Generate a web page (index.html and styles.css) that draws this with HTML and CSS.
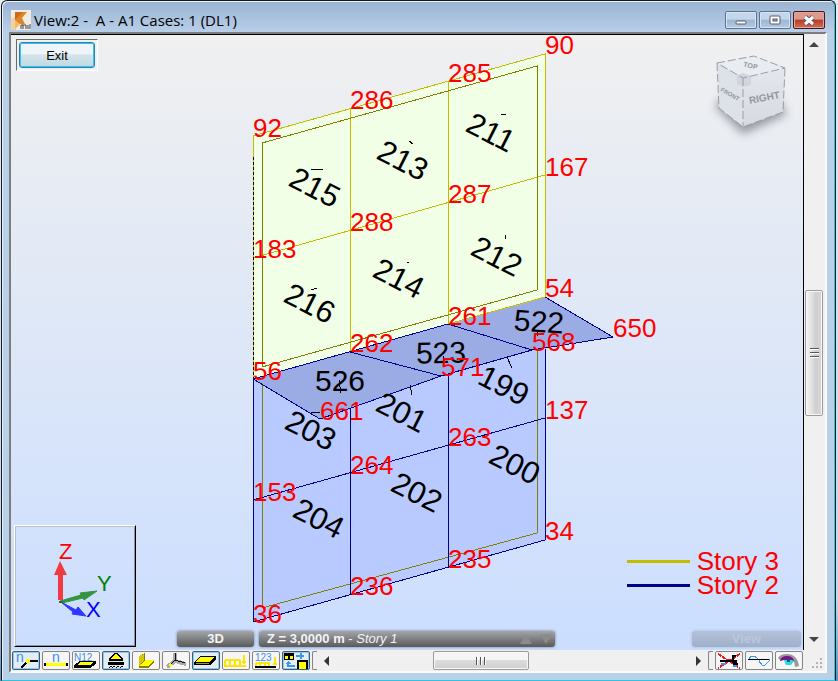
FILE: index.html
```
<!DOCTYPE html>
<html lang="en">
<head>
<meta charset="utf-8">
<title>View:2 - A - A1 Cases: 1 (DL1)</title>
<link rel="stylesheet" href="styles.css">
</head>
<body>
<main class="window">
  <header class="titlebar">
    <svg class="app-icon" viewBox="0 0 20 20" aria-hidden="true">
      <rect width="20" height="20" fill="#f3ece2"/>
      <path d="M0 20V9l5-3v14z" fill="#f0d3a4"/>
      <path d="M4 2h12l-5 6 3 6H9L4 18z" fill="#e0862a"/>
      <path d="M4 2h8L4 10z" fill="#c96a1c"/>
      <path d="M4 10l5 4-5 5z" fill="#f4b866"/>
      <path d="M10 19v-4h5v4M12 15v4M17 15v4M19 14v5" fill="none" stroke="#444"/>
    </svg>
    <h1 class="title">View:2 -&nbsp; A - A1 Cases: 1 (DL1)</h1>
    <div class="window-buttons">
      <button class="win-btn" aria-label="Minimize">
        <svg viewBox="0 0 30 16"><rect x="10" y="9" width="10" height="3" rx="1" fill="#fff" stroke="#555a66"/></svg>
      </button>
      <button class="win-btn" aria-label="Maximize">
        <svg viewBox="0 0 30 16"><rect x="10" y="4" width="10" height="8" rx="1" fill="#fff" stroke="#555a66"/><rect x="13" y="7" width="4" height="2" fill="#9ab4d2" stroke="#555a66"/></svg>
      </button>
      <button class="win-btn close" aria-label="Close">
        <svg viewBox="0 0 30 16"><path d="M11 5l8 7M19 5l-8 7" stroke="#555a66" stroke-width="5"/><path d="M11 5l8 7M19 5l-8 7" stroke="#fff" stroke-width="3"/></svg>
      </button>
    </div>
  </header>

  <section class="client">
    <div class="workspace">
      <div class="viewport">
        <svg class="model" viewBox="11 35 792 615" role="img" aria-label="Structural model of stories 2 and 3">
          <polygon points="253,136 546,54 546,297 253,379" fill="#f1ffe6"/>
          <polygon points="253,379 320,419 441,376 532,350 546,348 546,540 253,622" fill="#b8caff"/>
          <polygon points="253,379 546,297 613,337 532,350 441,376 320,419" fill="#9babe4"/>

          <g class="lines">
            <path class="yellow" d="M253 136L545 54V297L448 324M253 258L545 175M350 109V352M448 81V324M253 136V379"/>
            <path class="hidden-edge" d="M253 157V379"/>
            <path class="olive" d="M262 367V143L537 66V290L262 367M262 385V608L537 533V350"/>
            <path class="navy" d="M448 324L253 379V622L545 540V349M253 500L545 418M350 409V595M448 374V567"/>
            <path class="navy" d="M545 297L613 337L532 350L441 376L320 419L253 379M350 352L441 376M448 324L532 350"/>
            <path class="tick" d="M311 169H318L323 170M409 141L413 144M501 114H506M311 290L317 288M407 262H409M505 235V239M410 385L412 395M339 380L341 393M507 357L512 368M311 412L320 413M537 330V336M443 356V363"/>
          </g>

          <g class="panel-labels tilted">
            <text transform="translate(491 132) rotate(27)" y="11">211</text>
            <text transform="translate(403 160) rotate(27)" y="11">213</text>
            <text transform="translate(315 187) rotate(27)" y="11">215</text>
            <text transform="translate(497 256) rotate(27)" y="11">212</text>
            <text transform="translate(399 278) rotate(27)" y="11">214</text>
            <text transform="translate(310 303) rotate(27)" y="11">216</text>
            <text transform="translate(504 385) rotate(27)" y="11">199</text>
            <text transform="translate(402 412) rotate(27)" y="11">201</text>
            <text transform="translate(311 430) rotate(27)" y="11">203</text>
            <text transform="translate(515 464) rotate(27)" y="11">200</text>
            <text transform="translate(417 492) rotate(27)" y="11">202</text>
            <text transform="translate(319 518) rotate(27)" y="11">204</text>
          </g>
          <g class="panel-labels">
            <text transform="translate(539 321) rotate(4)" y="11">522</text>
            <text transform="translate(441 352) rotate(-1)" y="11">523</text>
            <text transform="translate(340 380)" y="11">526</text>
          </g>

          <g class="node-labels">
            <text x="253" y="137">92</text><text x="350" y="109">286</text><text x="448" y="82">285</text><text x="545" y="54">90</text>
            <text x="253" y="258">183</text><text x="350" y="231">288</text><text x="448" y="203">287</text><text x="545" y="176">167</text>
            <text x="253" y="380">56</text><text x="350" y="352">262</text><text x="448" y="325">261</text><text x="545" y="297">54</text>
            <text x="253" y="501">153</text><text x="350" y="474">264</text><text x="448" y="446">263</text><text x="545" y="419">137</text>
            <text x="253" y="623">36</text><text x="350" y="595">236</text><text x="448" y="568">235</text><text x="545" y="540">34</text>
            <text x="613" y="337">650</text><text x="532" y="351">568</text><text x="441" y="376">571</text><text x="320" y="420">661</text>
          </g>
        </svg>

        <div class="exit-panel"><button class="exit">Exit</button></div>

        <svg class="cube" viewBox="0 0 96 96" role="img" aria-label="View cube">
          <defs>
            <filter id="soft" x="-30%" y="-30%" width="160%" height="160%"><feGaussianBlur stdDeviation="5"/></filter>
            <linearGradient id="side" x1="0" y1="0" x2="0" y2="1"><stop offset="0" stop-color="#e4e8ee"/><stop offset="1" stop-color="#d6d9e0"/></linearGradient>
          </defs>
          <path d="M10 62L38 90L82 70L70 52L20 52z" fill="#777b84" opacity="0.75" filter="url(#soft)"/>
          <path d="M12 19L49 12L80 24L38 34z" fill="#e9ecf1"/>
          <path d="M12 19L38 34V83L14 64z" fill="#dde1e8"/>
          <path d="M38 34L80 24L78 68L38 83z" fill="url(#side)"/>
          <path d="M32 31L38 29L46 32V41L38 43L32 40z" fill="#d2d6dc"/>
          <path d="M12 19L49 12L80 24L38 34zM12 19L14 64L38 83L78 68L80 24M38 34V83" fill="none" stroke="#9a9da3" stroke-dasharray="8 3"/>
          <text class="face right" transform="translate(60 57) rotate(-11)">RIGHT</text>
          <text class="face front" transform="translate(24 52) rotate(30)">FRONT</text>
          <text class="face top" transform="translate(45 24) rotate(12)">TOP</text>
        </svg>

        <ul class="legend">
          <li><span class="swatch story3"></span>Story 3</li>
          <li><span class="swatch story2"></span>Story 2</li>
        </ul>

        <div class="overlay-bar">
          <svg class="axes" viewBox="0 0 120 120" role="img" aria-label="Axes X Y Z">
            <path d="M45 75L66 69L65 67L82 65L69 74L68 72L47 77z" fill="#33953d" stroke="#33953d"/>
            <path d="M46 76L61 84L63 81L71 90L57 88L58 86z" fill="#3038ff" stroke="#3038ff"/>
            <path d="M43 74V49H39L45 35L52 49H48V74z" fill="#f23a42"/>
            <path d="M44 75h4v2h-4z" fill="#2d6a30"/>
            <text x="44" y="33" fill="#ff0000">Z</text>
            <text x="82" y="65" fill="#008000">Y</text>
            <text x="71" y="91" fill="#0000ff">X</text>
          </svg>
          <button class="pill mode">3D</button>
          <div class="pill level"><span><b>Z = 3,0000 m</b> - <i>Story 1</i></span>
            <span class="level-nav">
              <button aria-label="Level up"><svg viewBox="0 0 12 10"><path d="M6 0L12 10H0z"/></svg></button>
              <button aria-label="Level down"><svg viewBox="0 0 12 10"><path d="M6 10L12 0H0z"/></svg></button>
            </span>
          </div>
          <button class="pill view">View</button>
        </div>
      </div>

      <div class="scroll vertical" role="scrollbar" aria-orientation="vertical" aria-valuenow="50">
        <button class="arrow" aria-label="Scroll up"><svg viewBox="0 0 10 6"><path d="M5 0L10 5H0z" fill="#444"/></svg></button>
        <span class="lead"></span>
        <span class="thumb"><i></i><i></i><i></i></span>
        <span class="trail"></span>
        <button class="arrow" aria-label="Scroll down"><svg viewBox="0 0 10 6"><path d="M5 5L10 0H0z" fill="#444"/></svg></button>
      </div>
    </div>

    <footer class="toolbar">
      <div class="tools">
        <button class="tool on" aria-label="Node numbers"><svg viewBox="1 1 26 17"><text x="4" y="11">n</text><path d="M14 12L9 17" stroke="#000" stroke-width="2"/><path d="M18 9h8v2h-8z"/><path d="M14 8h4v4h-4z" fill="#ff0"/></svg></button>
        <button class="tool" aria-label="Bar numbers"><svg viewBox="1 1 26 17"><text x="10" y="11">n</text><path d="M3 12h22v3H3z" fill="#ff0"/><path d="M2 12h2v3H2zM24 12h2v3h-2z"/></svg></button>
        <button class="tool" aria-label="Panel numbers"><svg viewBox="1 1 26 17"><text class="wide" x="2" y="10">N12</text><path d="M8 10H24V13L18 17H2V14z"/><path d="M9 11H22L18 14H5z" fill="#ff0"/></svg></button>
        <button class="tool on" aria-label="Supports"><svg viewBox="1 1 26 17"><path d="M7 10V8L12 2H16L21 8V10z"/><path d="M9 8L13 3H15L19 8z" fill="#ff0"/><path d="M6 11h16v3H6zM8 15h2v1H8zM11 15h2v1h-2zM15 15h2v1h-2zM19 15h2v1h-2zM7 16h1v1H7zM10 16h1v1h-1zM14 16h1v1h-1zM18 16h1v1h-1z"/></svg></button>
        <button class="tool" aria-label="Sections"><svg viewBox="1 1 26 17"><path d="M7 5L13 2V9H22V11L16 17H7z" fill="#8a7d00"/><path d="M7 5L12 3V9L9 12V15H7z" fill="#d6c800"/><path d="M8 14L13 9H22L16 15H8z" fill="#ff0"/></svg></button>
        <button class="tool" aria-label="Local systems"><svg viewBox="1 1 26 17"><path d="M13 2V10L5 16M13 10L24 13" stroke="#aaa" stroke-width="4" fill="none"/><path d="M13 2V9L8 14M13 9L23 12" stroke="#111" fill="none"/><path d="M6 14l2-2 2 2-2 2z" fill="#ff0"/></svg></button>
        <button class="tool on" aria-label="Panel thickness"><svg viewBox="1 1 26 17"><path d="M8 5H24V8L18 14H2V11z"/><path d="M8 6H22L17 11H4z" fill="#ff0"/><path d="M4 12H17V13H4z" fill="#a89c00"/></svg></button>
        <button class="tool" aria-label="Load symbols"><svg viewBox="1 1 26 17"><path d="M3 9H18M3 9V15M8 9V15M13 9V15M18 9V15M2 15H24M22 4V13M20 11H24" stroke="#ffe600" stroke-width="2" fill="none"/></svg></button>
        <button class="tool" aria-label="Load values"><svg viewBox="1 1 26 17"><text class="wide" x="3" y="10">123</text><path d="M4 12H18M4 12V15M8 12V15M13 12V15M17 12V15M23 6V14M21 13H25" stroke="#ffe600" stroke-width="2" fill="none"/><path d="M3 15H24V17H3z"/></svg></button>
        <button class="tool on" aria-label="Swap display"><svg viewBox="1 1 26 17"><path d="M2 2H12V9H2zM15 9H26V18H15z"/><path d="M3 5H6V8H3zM8 5H11V8H8zM17 11H24V18H17z" fill="#ff0"/><path d="M14 5H22M19 2V8M6 11V15H13" stroke="#3b96f2" stroke-width="2" fill="none"/><path d="M3 13L6 10L9 13z" fill="#3b96f2"/></svg></button>
        <span class="stub"></span>
      </div>
      <div class="scroll horizontal" role="scrollbar" aria-orientation="horizontal" aria-valuenow="38">
        <button class="arrow" aria-label="Scroll left"><svg viewBox="0 0 6 10"><path d="M0 5L5 0V10z" fill="#333"/></svg></button>
        <span class="lead"></span>
        <span class="thumb"><i></i><i></i><i></i></span>
        <span class="trail"></span>
        <button class="arrow" aria-label="Scroll right"><svg viewBox="0 0 6 10"><path d="M6 5L1 0V10z" fill="#333"/></svg></button>
      </div>
      <div class="tools">
        <span class="stub"></span>
        <button class="tool" aria-label="Deformation off"><svg viewBox="1 1 26 17"><path d="M3 3L25 17M25 3L3 17" stroke="#f01818" stroke-width="2" stroke-dasharray="4 1"/><path d="M5 9H22V11H5zM17 4H21V6H19V9H17zM17 9L23 12V14H18z"/><path d="M6 13H11M18 15H22" stroke="#3b96f2" stroke-width="2"/></svg></button>
        <button class="tool" aria-label="Diagrams"><svg viewBox="1 1 26 17"><path d="M4 8V7L7 5H9L12 7V8M14 9V10L17 14H20L24 10V8" stroke="#3b96f2" fill="none"/><path d="M3 8H24V9H3z"/></svg></button>
        <button class="tool" aria-label="Display attributes"><svg class="smooth" viewBox="1 1 26 17"><path d="M3 7Q5 3 12 3Q22 3 24 15L20 16Q20 8 13 7Q7 7 6 10z" fill="#9a9a9a"/><path d="M5 10Q6 5 12 5Q18 5 19 10L15 9H9z" fill="#76148c"/><path d="M9 9H14L19 10L16 14H11z" fill="#20dce8"/><path d="M12 8H15V11H12z" fill="#125b64"/></svg></button>
      </div>
      <svg class="grip" viewBox="0 0 12 12" aria-hidden="true"><path d="M9 1h2v2H9zM5 5h2v2H5zM9 5h2v2H9zM1 9h2v2H1zM5 9h2v2H5zM9 9h2v2H9z" fill="#b4b4b4"/></svg>
    </footer>
  </section>
</main>
</body>
</html>
```
FILE: styles.css
```
* {
  box-sizing: border-box;
}

body {
  margin: 0;
  height: 100vh;
  padding: 0 2px 0 1px;
  background: linear-gradient(#e8ecf2, #c5d8ec 88%, #5b8fc0);
  font: 13px "Liberation Sans", Arial, sans-serif;
  color: #000;
}

button {
  margin: 0;
  padding: 0;
  font: inherit;
  color: inherit;
}

svg {
  display: block;
  overflow: visible;
}

.window {
  display: flex;
  flex-direction: column;
  height: 100%;
  padding: 0 8px 7px 7px;
  border: 1px solid #16181c;
  border-bottom-color: #2cc5e0;
  border-radius: 6px 6px 0 0;
  background: linear-gradient(#99b3d1, #b9d0e9 32px, #b9d0e9);
  box-shadow: inset 1px 1px #e6f0fa, inset -1px 0 #2cc5e0;
}

.titlebar {
  flex: none;
  display: flex;
  align-items: center;
  height: 31px;
  padding: 6px 2px 0 2px;
}

.app-icon {
  width: 20px;
  height: 20px;
}

.title {
  flex: 1;
  margin: 0 0 0 3px;
  font: 15px "Open Sans", "Noto Sans", sans-serif;
  white-space: nowrap;
}

.window-buttons {
  display: flex;
  gap: 2px;
}

.win-btn {
  width: 32px;
  height: 18px;
  border: 1px solid #5c738f;
  border-radius: 2px;
  background: linear-gradient(#c4d6ea 45%, #9db6d2 50%, #b3cbe4);
  box-shadow: inset 0 0 0 1px #d6e4f3;
}

.win-btn svg {
  width: 30px;
  height: 16px;
}

.win-btn.close {
  border-color: #4a1420;
  background: linear-gradient(#dd9a8b 45%, #b93b24 50%, #cf6f56);
  box-shadow: inset 0 0 0 1px #e0a79a;
}

.client {
  flex: 1;
  min-height: 0;
  display: flex;
  flex-direction: column;
  border: 2px solid #7d7d7d;
  border-right: 2px solid #fbfbfb;
  border-bottom: 2px solid #fbfbfb;
  background: #f0f0f0;
}

.workspace {
  flex: 1;
  min-height: 0;
  display: flex;
}

.viewport {
  position: relative;
  flex: 1;
  min-width: 0;
  border-top: 1px solid #000;
  border-right: 1px solid #000;
  background: linear-gradient(#f0f0f0, #cbdeff);
}

.model {
  width: 100%;
  height: 100%;
}

.lines {
  fill: none;
  stroke-width: 1;
  shape-rendering: crispEdges;
}

.yellow { stroke: #c3bd00; }
.olive { stroke: #808000; }
.navy { stroke: #00008b; }
.tick { stroke: #000; }

.hidden-edge {
  stroke: #000;
  stroke-dasharray: 3 2;
}

.panel-labels {
  font-size: 30px;
  text-anchor: middle;
}

.panel-labels.tilted {
  font-size: 31px;
}

.node-labels {
  font-size: 26px;
  fill: #ff0000;
}

.exit-panel {
  position: absolute;
  top: 4px;
  left: 5px;
  padding: 2px;
  border: 1px solid #6c6c6c;
  border-right-color: #fff;
  border-bottom-color: #fff;
}

.exit {
  display: block;
  width: 76px;
  height: 26px;
  border: 1px solid #2f7fab;
  border-radius: 3px;
  background: linear-gradient(#eef4f7 45%, #d3e4eb 50%, #c0d8e2);
  box-shadow: inset 0 0 0 1px #35c4f4;
}

.cube {
  position: absolute;
  top: 9px;
  right: 2px;
  width: 96px;
  height: 96px;
}

.face {
  font-weight: bold;
  text-anchor: middle;
  fill: #92969e;
}

.face.right { font-size: 10px; }
.face.front { font-size: 6px; }
.face.top { font-size: 7px; }

.legend {
  position: absolute;
  right: 24px;
  bottom: 53px;
  margin: 0;
  padding: 0;
  list-style: none;
  font-size: 26px;
  line-height: 24px;
  color: #ff0000;
}

.legend li {
  display: flex;
  align-items: center;
  gap: 7px;
}

.swatch {
  width: 63px;
  height: 3px;
}

.story3 { background: #c3bd00; }
.story2 { background: #00008b; }

.overlay-bar {
  position: absolute;
  left: 3px;
  right: 2px;
  bottom: 3px;
  display: flex;
  align-items: flex-end;
  gap: 5px;
}

.axes {
  width: 122px;
  height: 122px;
  margin-right: 36px;
  border: 1px solid #fff;
  border-right: 1px solid #000;
  border-bottom: 1px solid #000;
  box-shadow: inset 1px 1px #b8c0cc, inset -1px -1px #8e949c;
}

.axes text {
  font-size: 22px;
}

.pill {
  height: 16px;
  padding: 0;
  border: 0;
  border-radius: 3px;
  background: linear-gradient(#a3a5a8, #5a5a5a);
  box-shadow: 0 0 3px #707890;
  color: #f4f4f4;
  line-height: 16px;
}

.mode {
  width: 77px;
  font-weight: bold;
}

.level {
  display: flex;
  justify-content: space-between;
  width: 296px;
  padding: 0 3px 0 8px;
  white-space: pre;
}

.level-nav {
  display: flex;
  align-items: center;
  gap: 8px;
}

.level-nav button {
  border: 0;
  background: none;
}

.level-nav svg {
  width: 12px;
  height: 10px;
  fill: #8b8b8b;
}

.view {
  width: 109px;
  margin-left: auto;
  background: linear-gradient(#b4c2d9, #9fb0cb);
  box-shadow: 0 0 3px #a9b8d2;
  color: #b9c7de;
  font-weight: bold;
}

.scroll {
  display: flex;
  align-items: stretch;
}

.vertical {
  flex: none;
  flex-direction: column;
  width: 21px;
  padding: 1px 2px 0 1px;
}

.horizontal {
  flex: 1;
  min-width: 0;
}

.arrow {
  flex: none;
  display: grid;
  place-items: center;
  border: 0;
  background: none;
}

.vertical .arrow { height: 20px; }
.horizontal .arrow { width: 20px; }
.vertical .arrow svg { width: 10px; height: 6px; }
.horizontal .arrow svg { width: 6px; height: 10px; }

.thumb {
  display: flex;
  align-items: center;
  justify-content: center;
  gap: 2px;
  border: 1px solid #9a9a9a;
  border-radius: 2px;
  background: linear-gradient(#f5f5f5 45%, #dcdcdc 50%, #cfcfcf);
  box-shadow: inset 0 0 0 1px #f8f8f8;
}

.vertical .thumb {
  flex-direction: column;
  background: linear-gradient(90deg, #f5f5f5, #dcdcdc 45%, #cfcfd2 60%, #d8d8d8);
}

.thumb i {
  width: 2px;
  height: 8px;
  border-left: 1px solid #555;
  background: #fff;
}

.vertical .thumb i {
  width: 9px;
  height: 2px;
  border-left: 0;
  border-top: 1px solid #555;
}

.vertical .lead { flex: 235; }
.vertical .thumb { flex: 124; }
.vertical .trail { flex: 214; }
.horizontal .lead { flex: 96; }
.horizontal .thumb { flex: 95; }
.horizontal .trail { flex: 159; }

.toolbar {
  flex: none;
  display: flex;
  height: 21px;
  padding: 1px 2px 1px 1px;
  background: #f0f0f0;
}

.tools {
  display: flex;
  gap: 2px;
}

.tool {
  width: 28px;
  height: 19px;
  border: 1px solid #858585;
  border-radius: 2px;
  background: #f6f6f6;
}

.tool.on {
  border-color: #2c628b;
  background: #e2edf5;
  box-shadow: inset 0 0 0 1px #a7c5da;
}

.tool svg {
  width: 26px;
  height: 17px;
  shape-rendering: crispEdges;
}

.tool svg.smooth {
  shape-rendering: auto;
}

.tool text {
  font-size: 14px;
  fill: #3b8eea;
}

.tool text.wide {
  font-size: 10px;
}

.stub {
  width: 5px;
  border: 1px solid #858585;
  border-right: 0;
  border-radius: 2px 0 0 2px;
}

.grip {
  width: 12px;
  height: 12px;
  margin: 6px 0 0 8px;
}
```
